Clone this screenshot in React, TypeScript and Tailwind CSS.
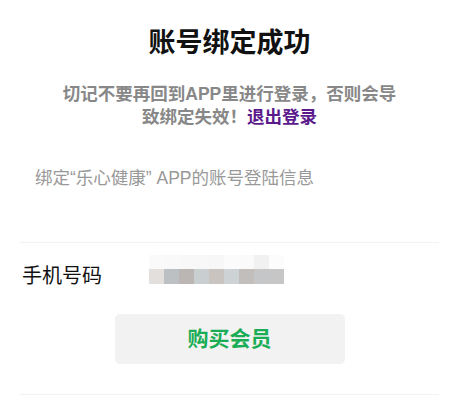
const topRow = [
  "bg-[#fafafa]",
  "bg-[#f9f9f9]",
  "bg-[#f8f8f8]",
  "bg-[#f8f8f8]",
  "bg-[#f7f7f7]",
  "bg-[#fbfbfb]",
  "bg-[#fafafa]",
  "bg-[#f1f1f1]",
  "bg-[#fcfcfc]",
];

const bottomRow = [
  "bg-[#e3dfdd]",
  "bg-[#bcc0c3]",
  "bg-[#bbb6b4]",
  "bg-[#c9cfd1]",
  "bg-[#c9c4bf]",
  "bg-[#cdd2d5]",
  "bg-[#c2bebc]",
  "bg-[#c4c6c8]",
  "bg-[#c5c6c5]",
];

export default function App() {
  return (
    <div className="w-[463px] h-[407px] bg-white pl-5 pr-6 font-['Liberation_Sans','Noto_Sans_CJK_SC',sans-serif]">
      <h1 className="pt-[25px] text-center text-[27px] font-bold leading-[36px] text-[#111]">
        账号绑定成功
      </h1>
      <p className="mt-[22px] text-center text-[17.5px] font-bold leading-[23px] text-[#888]">
        切记不要再回到APP里进行登录，否则会导
        <br />
        致绑定失效！<span className="text-[#5b1a8c]">退出登录</span>
      </p>
      <p className="mt-[37px] pl-[15px] text-[17.5px] leading-[24px] text-[#999]">
        绑定“乐心健康” APP的账号登陆信息
      </p>
      <div className="mt-[52px] h-px bg-[#f2f2f2]" />
      <div className="mt-[12px] flex items-start">
        <span className="mt-[10px] w-[129px] pl-[2px] text-[20px] leading-[22px] text-[#111]">
          手机号码
        </span>
        <div className="flex flex-col">
          <div className="flex h-[14px]">
            {topRow.map((c, i) => (
              <div key={i} className={"w-[15px] " + c} />
            ))}
          </div>
          <div className="flex h-[15px]">
            {bottomRow.map((c, i) => (
              <div key={i} className={"w-[15px] " + c} />
            ))}
          </div>
        </div>
      </div>
      <button className="mx-auto mt-[27px] flex h-[50px] w-[230px] items-center justify-center rounded-[5px] bg-[#f2f2f2] text-[21px] font-bold text-[#1aad55]">
        购买会员
      </button>
      <div className="mt-[30px] h-px bg-[#f2f2f2]" />
    </div>
  );
}
